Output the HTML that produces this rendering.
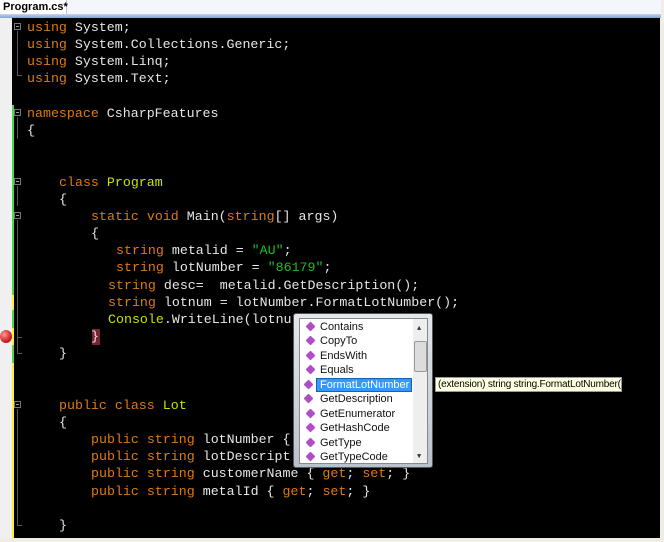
<!DOCTYPE html>
<html><head><meta charset="utf-8"><style>
body{margin:0;width:664px;height:542px;overflow:hidden;background:#f0ede4;position:relative;font-family:"Liberation Mono",monospace}
.hdr{position:absolute;left:0;top:0;width:661px;height:14px;background:#f3f6fb}
.tab{position:absolute;left:0;top:0;width:67px;height:15px;background:#fff;border-right:1px solid #b8c4d8;font:bold 11px "Liberation Sans",sans-serif;line-height:14px;padding-left:3px;box-sizing:border-box;color:#000}
.bl{position:absolute;left:0;top:14px;width:661px;height:4px;background:linear-gradient(#c5d6ea,#7fa5cf)}
.gut{position:absolute;left:0;top:18px;width:12px;height:520px;background:#f0f0f0}
.ed{position:absolute;left:12px;top:18px;width:648px;height:520px;background:#000}
.l{position:absolute;font-size:13.3px;white-space:pre;color:#e6e6e6;line-height:17px}
.k{color:#e07a10}.t{color:#c8e000}.s{color:#1fc01f}
.fb{position:absolute;left:14px;width:7px;height:7px;border:1px solid #777;box-sizing:border-box}
.fb:after{content:"";position:absolute;left:1px;top:2px;width:3px;height:1px;background:#999}
.v{position:absolute;left:17px;width:1px;background:#555}
.h{position:absolute;left:17px;width:5px;height:1px;background:#555}
.pop{position:absolute;left:293px;top:313px;width:140px;height:155px;border:1px solid #555;border-radius:3px;background:linear-gradient(#e4e8ee,#b9c2cc);box-sizing:border-box}
.lst{position:absolute;left:5px;top:4px;width:129px;height:146px;background:#fff;border:1px solid #888;box-sizing:border-box}
.it{position:absolute;left:20px;font:11px "Liberation Sans",sans-serif;color:#111;line-height:14px;white-space:nowrap}
.ic{position:absolute;left:7px;width:7px;height:7px;background:#b04cc8;transform:rotate(45deg);border-radius:1px}
.sb{position:absolute;right:0;top:0;width:14px;height:144px;background:#eee}
.tip{position:absolute;left:435px;top:377px;width:187px;height:15px;background:#ffffe1;border:1px solid #999;box-sizing:border-box;font:10px "Liberation Sans",sans-serif;line-height:13px;padding-left:2px;color:#000;white-space:nowrap;overflow:hidden;letter-spacing:-0.2px}
</style></head><body>
<div class="hdr"></div><div class="tab">Program.cs*</div><div class="bl"></div>
<div class="gut"></div>
<div class="ed"></div>
<div style="position:absolute;left:12px;top:105px;width:2px;height:190px;background:#4cd84c"></div>
<div style="position:absolute;left:12px;top:18px;width:2px;height:87px;background:#000"></div>
<div style="position:absolute;left:12px;top:295px;width:2px;height:243px;background:#ffee30"></div>
<div style="position:absolute;left:12px;top:310px;width:2px;height:18px;background:#4cd84c"></div>
<div style="position:absolute;left:12px;top:345px;width:2px;height:18px;background:#4cd84c"></div>
<div style="position:absolute;left:0;top:330px;width:12px;height:13px;border-radius:50%;background:radial-gradient(circle at 35% 35%,#f99,#c22 60%,#811)"></div>
<div class="fb" style="top:23px"></div><div class="v" style="top:31px;height:44px"></div><div class="h" style="top:75px"></div>
<div class="fb" style="top:109px"></div><div class="v" style="top:117px;height:22px"></div>
<div class="fb" style="top:178px"></div><div class="v" style="top:186px;height:20px"></div>
<div class="fb" style="top:212px"></div><div class="v" style="top:220px;height:120px"></div><div class="h" style="top:337px"></div>
<div class="v" style="top:340px;height:14px"></div><div class="h" style="top:353px"></div>
<div class="fb" style="top:401px"></div><div class="v" style="top:409px;height:116px"></div><div class="h" style="top:525px"></div>
<div style="position:absolute;left:92px;top:329px;width:8px;height:16px;background:#7a2330"></div>
<div class="l" style="left:27px;top:19px"><span class="k">using</span> System;</div>
<div class="l" style="left:27px;top:36px"><span class="k">using</span> System.Collections.Generic;</div>
<div class="l" style="left:27px;top:53px"><span class="k">using</span> System.Linq;</div>
<div class="l" style="left:27px;top:70px"><span class="k">using</span> System.Text;</div>
<div class="l" style="left:27px;top:105px"><span class="k">namespace</span> CsharpFeatures</div>
<div class="l" style="left:27px;top:122px">{</div>
<div class="l" style="left:59px;top:174px"><span class="k">class</span> <span class="t">Program</span></div>
<div class="l" style="left:59px;top:191px">{</div>
<div class="l" style="left:91px;top:208px"><span class="k">static void</span> Main(<span class="k">string</span>[] args)</div>
<div class="l" style="left:91px;top:225px">{</div>
<div class="l" style="left:116px;top:242px"><span class="k">string</span> metalid = <span class="s">"AU"</span>;</div>
<div class="l" style="left:116px;top:259px"><span class="k">string</span> lotNumber = <span class="s">"86179"</span>;</div>
<div class="l" style="left:108px;top:277px"><span class="k">string</span> desc=  metalid.GetDescription();</div>
<div class="l" style="left:108px;top:294px"><span class="k">string</span> lotnum = lotNumber.FormatLotNumber();</div>
<div class="l" style="left:108px;top:311px"><span class="t">Console</span>.WriteLine(lotnu</div>
<div class="l" style="left:91px;top:328px">}</div>
<div class="l" style="left:59px;top:345px">}</div>
<div class="l" style="left:59px;top:397px"><span class="k">public class</span> <span class="t">Lot</span></div>
<div class="l" style="left:59px;top:414px">{</div>
<div class="l" style="left:91px;top:431px"><span class="k">public string</span> lotNumber {</div>
<div class="l" style="left:91px;top:448px"><span class="k">public string</span> lotDescript</div>
<div class="l" style="left:91px;top:465px"><span class="k">public string</span> customerName { <span class="k">get</span>; <span class="k">set</span>; }</div>
<div class="l" style="left:91px;top:483px"><span class="k">public string</span> metalId { <span class="k">get</span>; <span class="k">set</span>; }</div>
<div class="l" style="left:59px;top:517px">}</div>
<div class="pop"><div class="lst">
<div class="ic" style="top:4px"></div><div class="it" style="top:1px">Contains</div>
<div class="ic" style="top:18px"></div><div class="it" style="top:15px">CopyTo</div>
<div class="ic" style="top:33px"></div><div class="it" style="top:30px">EndsWith</div>
<div class="ic" style="top:47px"></div><div class="it" style="top:44px">Equals</div>
<div class="ic" style="top:62px;left:5px"></div><div style="position:absolute;left:16px;top:59px;width:96px;height:14px;background:#3399ff;border:1px solid #1a5fb0;box-sizing:border-box"></div><div class="it" style="top:59px;color:#fff">FormatLotNumber</div>
<div class="ic" style="top:76px;left:5px"></div><div class="it" style="top:73px">GetDescription</div>
<div class="ic" style="top:91px"></div><div class="it" style="top:88px">GetEnumerator</div>
<div class="ic" style="top:105px"></div><div class="it" style="top:102px">GetHashCode</div>
<div class="ic" style="top:120px"></div><div class="it" style="top:117px">GetType</div>
<div class="ic" style="top:134px"></div><div class="it" style="top:131px">GetTypeCode</div>
<div class="sb"><div style="position:absolute;left:1px;top:22px;width:11px;height:29px;background:#dcdcdc;border:1px solid #999;border-radius:2px"></div><div style="position:absolute;left:4px;top:6px;font-size:7px;color:#333">▲</div><div style="position:absolute;left:4px;top:134px;font-size:7px;color:#333">▼</div></div>
</div></div>
<div class="tip">(extension) string string.FormatLotNumber()</div>
</body></html>
